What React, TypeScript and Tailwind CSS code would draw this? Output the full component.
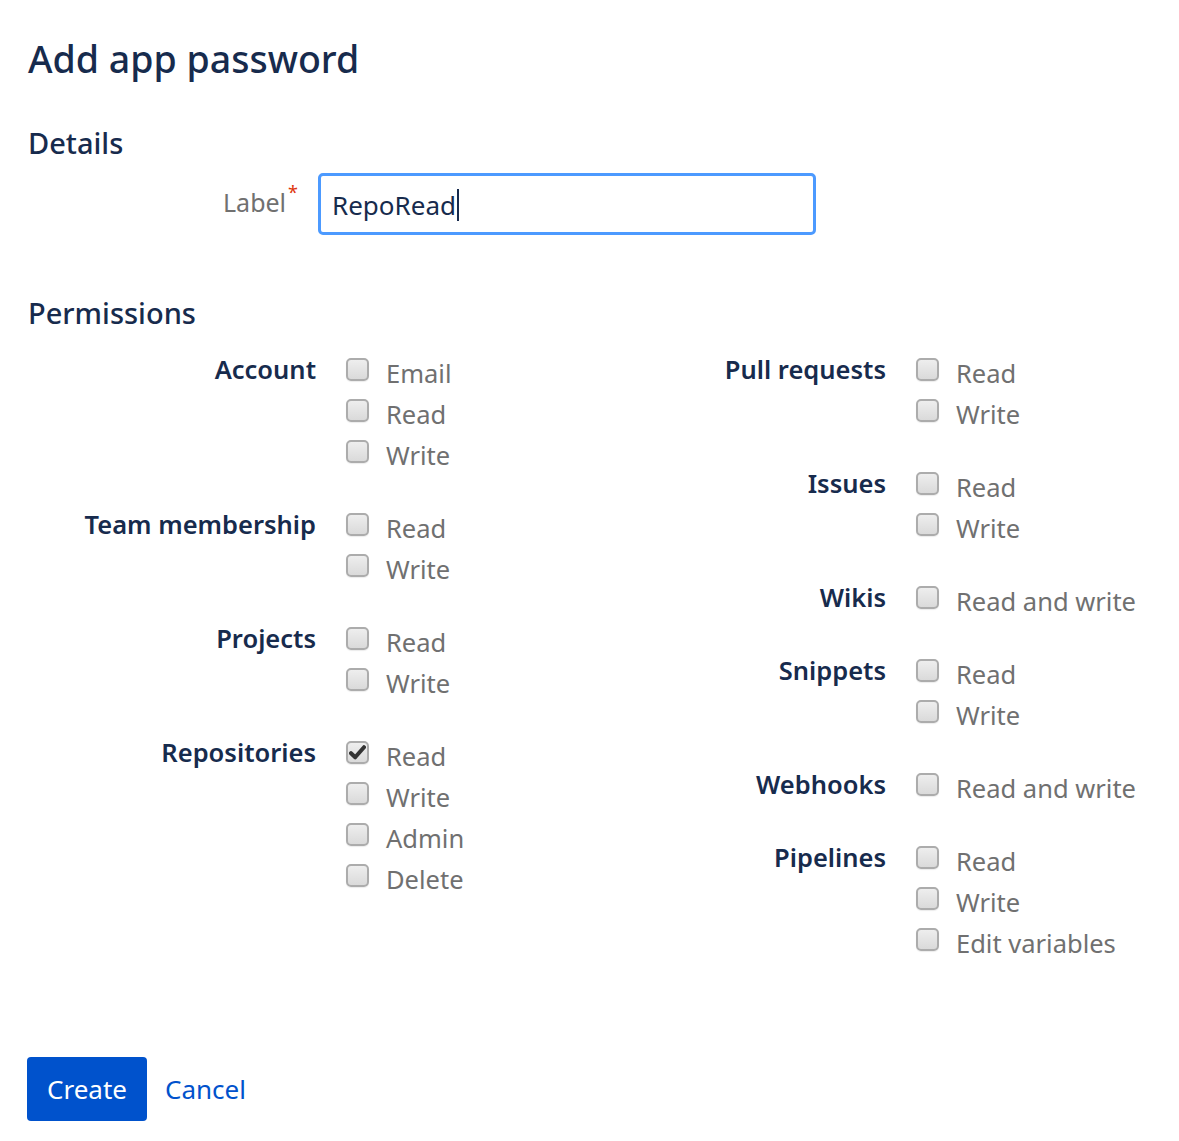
import React from "react";

type Group = { label: string; options: string[]; checked?: string[] };

const left: Group[] = [
  { label: "Account", options: ["Email", "Read", "Write"] },
  { label: "Team membership", options: ["Read", "Write"] },
  { label: "Projects", options: ["Read", "Write"] },
  { label: "Repositories", options: ["Read", "Write", "Admin", "Delete"], checked: ["Read"] },
];

const right: Group[] = [
  { label: "Pull requests", options: ["Read", "Write"] },
  { label: "Issues", options: ["Read", "Write"] },
  { label: "Wikis", options: ["Read and write"] },
  { label: "Snippets", options: ["Read", "Write"] },
  { label: "Webhooks", options: ["Read and write"] },
  { label: "Pipelines", options: ["Read", "Write", "Edit variables"] },
];

function Checkbox({ checked }: { checked?: boolean }) {
  return (
    <div className="mt-[5px] h-[23px] w-[23px] shrink-0 rounded-[5px] border-2 border-[#acacac] bg-gradient-to-b from-[#eeeeee] to-[#dadada] shadow-[0_1px_1px_rgba(0,0,0,0.08)] flex items-center justify-center">
      {checked && (
        <svg width="17" height="15" viewBox="0 0 17 15">
          <path d="M2 8.2 L6.2 12.3 L15 2.2" fill="none" stroke="#333333" strokeWidth="4" strokeLinecap="round" strokeLinejoin="round" />
        </svg>
      )}
    </div>
  );
}

function GroupBlock({ g }: { g: Group }) {
  return (
    <div className="flex items-start">
      <div className="w-[288px] shrink-0 text-right text-[25.5px] leading-[32px] font-semibold text-[#172B4D]">
        {g.label}
      </div>
      <div className="ml-[30px] flex flex-col">
        {g.options.map((o) => (
          <div key={o} className="flex items-start h-[41px]">
            <Checkbox checked={g.checked?.includes(o)} />
            <span className="ml-[17px] text-[25.5px] leading-[41px] text-[#707070] whitespace-nowrap">{o}</span>
          </div>
        ))}
      </div>
    </div>
  );
}

export default function App() {
  return (
    <div
      className="min-h-[1141px] w-[1179px] bg-white pl-[28px] pt-[35px] text-[#172B4D]"
      style={{ fontFamily: '"Noto Sans", "Open Sans", sans-serif' }}
    >
      <h1 className="text-[37.5px] leading-[48px] font-medium text-[#172B4D]">Add app password</h1>
      <h2 className="mt-[42px] text-[29px] leading-[36px] font-medium">Details</h2>
      <div className="mt-[12px] flex items-center">
        <div className="w-[270px] shrink-0 flex justify-end items-start -mt-[4px]">
          <span className="text-[25px] leading-[32px] text-[#707070]">Label</span>
          <span className="ml-[2px] -mt-[4px] text-[18px] leading-[20px] text-[#DE350B]">*</span>
        </div>
        <div className="ml-[20px] flex h-[62px] w-[498px] items-center rounded-[5px] border-[3px] border-[#4C9AFF] bg-white pl-[11px]">
          <span className="mt-[2px] text-[26px] leading-[32px] text-[#172B4D]">RepoRead</span>
          <span className="ml-[1px] mt-[2px] h-[32px] w-[2px] bg-[#172B4D]" />
        </div>
      </div>
      <h2 className="mt-[60px] text-[29px] leading-[36px] font-medium">Permissions</h2>
      <div className="mt-[22px] flex">
        <div className="w-[570px] flex flex-col gap-[32px]">
          {left.map((g) => (
            <GroupBlock key={g.label} g={g} />
          ))}
        </div>
        <div className="w-[570px] flex flex-col gap-[32px]">
          {right.map((g) => (
            <GroupBlock key={g.label} g={g} />
          ))}
        </div>
      </div>
      <div className="mt-[93px] flex items-center">
        <button className="-ml-[1px] h-[64px] rounded-[4px] bg-[#0052CC] px-[20px] text-[26px] text-white">Create</button>
        <a className="ml-[18px] text-[26px] text-[#0052CC]" href="#">Cancel</a>
      </div>
    </div>
  );
}
